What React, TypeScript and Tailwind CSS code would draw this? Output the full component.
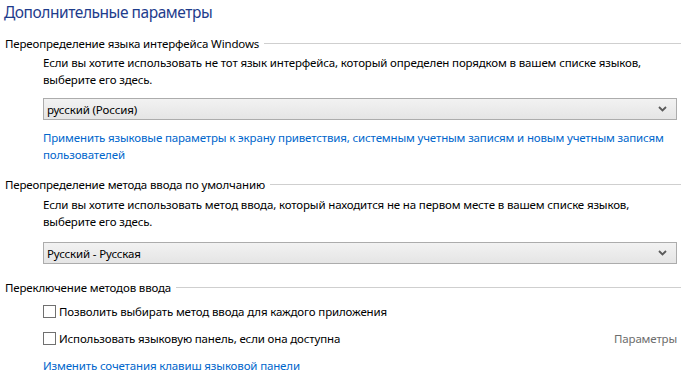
import React from "react";

const font = { fontFamily: '"Noto Sans", "Open Sans", sans-serif' };

function Header({ children }: { children: React.ReactNode }) {
  return (
    <div className="flex items-center h-[17px] pl-[5px]">
      <span className="whitespace-nowrap text-[#000000]">{children}</span>
      <div className="flex-1 ml-[5px] h-px bg-[#cfcfcf]" />
    </div>
  );
}

function Select({ value }: { value: string }) {
  return (
    <div className="ml-[43px] mr-[4px] h-[22px] border border-[#acacac] bg-gradient-to-b from-[#f2f2f2] to-[#e5e5e5] flex items-center pl-[3px] pr-[9px]">
      <span className="flex-1 text-[#000000]">{value}</span>
      <svg width="9" height="6" viewBox="0 0 9 6">
        <path d="M1 1 L4.5 4.5 L8 1" fill="none" stroke="#5a5a5a" strokeWidth="1.8" />
      </svg>
    </div>
  );
}

function Check({ label, right }: { label: string; right?: string }) {
  return (
    <div className="flex items-center h-[17px] pl-[43px] pr-[4px]">
      <div className="w-[13px] h-[13px] border border-[#707070] bg-white" />
      <span className="ml-[3px] flex-1 whitespace-nowrap">{label}</span>
      {right && <span className="text-[#6d6d6d]">{right}</span>}
    </div>
  );
}

export default function App() {
  return (
    <div className="w-[681px] h-[374px] bg-white overflow-hidden text-[11.5px] tracking-[-0.15px] leading-[17px] text-black" style={font}>
      <div className="h-[24px] pl-[4px] text-[15.5px] tracking-[-0.45px] leading-[24px] text-[#1e3c8c]">Дополнительные параметры</div>
      <div className="mt-[11px]">
        <Header>Переопределение языка интерфейса Windows</Header>
      </div>
      <div className="mt-[2px] pl-[43px] pr-[4px]">
        Если вы хотите использовать не тот язык интерфейса, который определен порядком в вашем списке языков, выберите его здесь.
      </div>
      <div className="mt-[10px]">
        <Select value="русский (Россия)" />
      </div>
      <div className="mt-[9px] pl-[43px] pr-[4px] text-[#0066cc]">
        Применить языковые параметры к экрану приветствия, системным учетным записям и новым учетным записям пользователей
      </div>
      <div className="mt-[13px]">
        <Header>Переопределение метода ввода по умолчанию</Header>
      </div>
      <div className="mt-[3px] pl-[43px] pr-[4px]">
        Если вы хотите использовать метод ввода, который находится не на первом месте в вашем списке языков, выберите его здесь.
      </div>
      <div className="mt-[12px]">
        <Select value="Русский - Русская" />
      </div>
      <div className="mt-[15px]">
        <Header>Переключение методов ввода</Header>
      </div>
      <div className="mt-[7px]">
        <Check label="Позволить выбирать метод ввода для каждого приложения" />
      </div>
      <div className="mt-[10px]">
        <Check label="Использовать языковую панель, если она доступна" right="Параметры" />
      </div>
      <div className="mt-[10px] pl-[43px] text-[#0066cc]">Изменить сочетания клавиш языковой панели</div>
    </div>
  );
}
